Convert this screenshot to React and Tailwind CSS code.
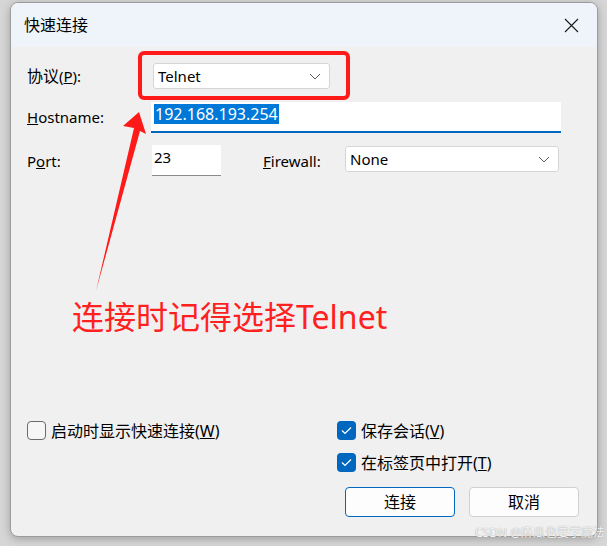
import React from 'react'

const font = { fontFamily: '"Noto Sans", "Noto Sans CJK SC", sans-serif' }

function Chevron() {
  return (
    <svg width="12" height="7" viewBox="0 0 12 7" className="shrink-0">
      <path d="M1 1 L6 6 L11 1" fill="none" stroke="#5a5a5a" strokeWidth="1" />
    </svg>
  )
}

function Select({ value, className }) {
  return (
    <div className={`h-[26px] bg-white border border-[#d5d5d5] rounded-[3px] flex items-center justify-between pl-[4px] pr-[8px] text-[15px] text-black ${className}`}>
      <span>{value}</span>
      <Chevron />
    </div>
  )
}

function Check({ checked }) {
  if (checked) {
    return (
      <div className="w-[19px] h-[19px] rounded-[4px] bg-[#0067c0] flex items-center justify-center shrink-0">
        <svg width="11" height="9" viewBox="0 0 11 9">
          <path d="M1 4.5 L4 7.5 L10 1.5" fill="none" stroke="white" strokeWidth="1.2" />
        </svg>
      </div>
    )
  }
  return <div className="w-[19px] h-[19px] rounded-[4px] border border-[#6b6b6b] bg-[#f6f6f6] shrink-0" />
}

export default function App() {
  return (
    <div className="relative w-[607px] h-[546px] bg-[#d6d6d6] overflow-hidden pt-[2px] pl-[10px]" style={font}>
      <div className="w-[588px] h-[535px] rounded-[8px] border border-[#9c9c9c] bg-[#f0f0f0] overflow-hidden flex flex-col shadow-[0_2px_8px_rgba(0,0,0,0.25)]">
        {/* Title bar */}
        <div className="h-[44px] bg-[#eef4f9] flex items-center justify-between pl-[13px] pr-[18px] shrink-0">
          <span className="text-[16px] text-black">快速连接</span>
          <svg width="15" height="15" viewBox="0 0 15 15">
            <path d="M1 1 L14 14 M14 1 L1 14" stroke="#1a1a1a" strokeWidth="1.1" />
          </svg>
        </div>

        {/* Body */}
        <div className="flex-1 flex flex-col pl-[16px] text-[15px] text-black">
          <div className="flex items-center h-[26px] mt-[16px]">
            <span className="w-[126px]"><span className="text-[16px]">协议</span>(<u>P</u>):</span>
            <Select value="Telnet" className="w-[177px]" />
          </div>

          <div className="flex items-center h-[31px] mt-[13px]">
            <span className="w-[124px]"><u>H</u>ostname:</span>
            <div className="w-[410px] h-[31px] bg-white border-b-2 border-[#0067c0] flex items-start pt-[2px] pl-[3px]">
              <span className="bg-[#0078d7] text-white text-[16px] leading-[20px] px-[1px]">192.168.193.254</span>
            </div>
          </div>

          <div className="flex items-start h-[31px] mt-[12px]">
            <span className="w-[125px] mt-[5px]">P<u>o</u>rt:</span>
            <div className="w-[69px] h-[31px] bg-white border-b border-[#8a8a8a] pl-[2px] pt-[1px]">23</div>
            <span className="w-[82px] ml-[42px] mt-[5px]"><u>F</u>irewall:</span>
            <Select value="None" className="w-[214px] mt-[1px]" />
          </div>

          <div className="ml-[45px] mt-[121px] text-[32px] leading-[40px] text-[#ff2020]">连接时记得选择Telnet</div>

          <div className="flex items-center mt-[84px] h-[19px] text-[16px]">
            <div className="flex items-center gap-[5px] w-[310px]">
              <Check checked={false} />
              <span>启动时显示快速连接(<u>W</u>)</span>
            </div>
            <div className="flex items-center gap-[5px]">
              <Check checked />
              <span>保存会话(<u>V</u>)</span>
            </div>
          </div>

          <div className="flex items-center mt-[13px] h-[19px] pl-[310px] text-[16px]">
            <div className="flex items-center gap-[5px]">
              <Check checked />
              <span>在标签页中打开(<u>T</u>)</span>
            </div>
          </div>

          <div className="flex gap-[14px] mt-[15px] pl-[318px] text-[16px]">
            <div className="w-[110px] h-[30px] bg-[#fdfdfd] border border-[#0067c0] rounded-[4px] flex items-center justify-center">连接</div>
            <div className="w-[110px] h-[30px] bg-[#fdfdfd] border border-[#d0d0d0] rounded-[4px] flex items-center justify-center">取消</div>
          </div>
        </div>
      </div>

      {/* Annotation: red box around protocol */}
      <div className="absolute left-[138px] top-[51px] w-[212px] h-[49px] border-[4px] border-[#ff1a1a] rounded-[6px]" />

      {/* Annotation: arrow */}
      <svg className="absolute left-0 top-0" width="607" height="546" viewBox="0 0 607 546">
        <polygon points="139,112 146,134 140,131 96,291 134,128 123,126" fill="#ff1a1a" />
      </svg>

      {/* Watermark */}
      <div className="absolute left-[475px] top-[526px] text-[12px] leading-[14px] text-[#f4f4f4] [text-shadow:0_0_1px_#8a8a8a]">CSDN @麻瓜也要学魔法</div>
    </div>
  )
}
